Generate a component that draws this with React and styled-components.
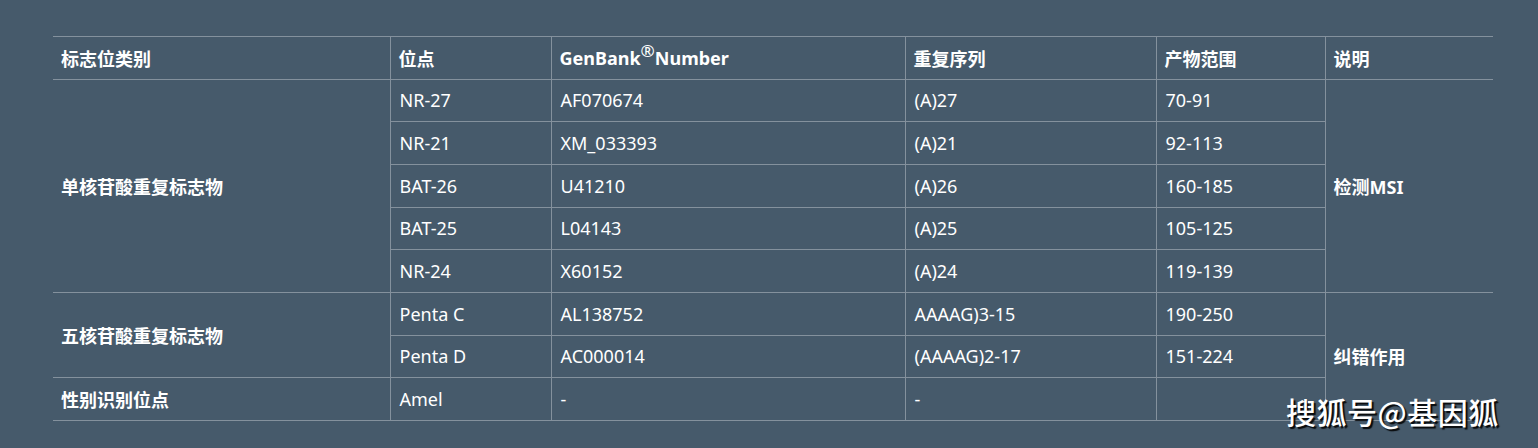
import React from 'react';
import styled, { createGlobalStyle } from 'styled-components';

const GlobalStyle = createGlobalStyle`
  html, body {
    margin: 0;
    padding: 0;
    background-color: #465a6b;
  }
`;

const Page = styled.div`
  position: relative;
  width: 1538px;
  height: 448px;
  box-sizing: border-box;
  padding: 36px 0 0 53px;
  background-color: #465a6b;
  font-family: "Noto Sans", "Noto Sans CJK SC", sans-serif;
  color: #ffffff;
`;

const Table = styled.table`
  width: 1440px;
  border-collapse: collapse;
  border-left: hidden;
  border-right: hidden;
  table-layout: fixed;
  font-size: 18px;
`;

const HeadCell = styled.th`
  height: 41.67px;
  padding: 0 8px;
  border: 1px solid #84919d;
  text-align: left;
  vertical-align: middle;
  font-weight: 700;
  white-space: nowrap;
`;

const Cell = styled.td`
  height: 41.67px;
  padding: 0 9px;
  padding-left: ${(p) => (p.$bold ? '8px' : '9px')};
  border: 1px solid #84919d;
  text-align: left;
  vertical-align: middle;
  font-weight: ${(p) => (p.$bold ? 700 : 400)};
  white-space: nowrap;
`;

const Sup = styled.sup`
  font-size: 0.95em;
  font-weight: 400;
  vertical-align: 0.45em;
  line-height: 0;
`;

const Watermark = styled.div`
  position: absolute;
  left: 1286px;
  top: 393px;
  font-family: "Noto Sans CJK SC", sans-serif;
  font-size: 30px;
  font-weight: 500;
  line-height: 1.2;
  letter-spacing: 0.5px;
  color: #ffffff;
  text-shadow: 2px 2px 1px rgba(0, 0, 0, 0.9);
  white-space: nowrap;
`;

// widths of the six columns, px
const colWidths = [337, 161, 354, 251, 169, 168];

const rows = [
  { group: '单核苷酸重复标志物', span: 5, note: '检测MSI', noteSpan: 5, site: 'NR-27', gb: 'AF070674', seq: '(A)27', range: '70-91' },
  { site: 'NR-21', gb: 'XM_033393', seq: '(A)21', range: '92-113' },
  { site: 'BAT-26', gb: 'U41210', seq: '(A)26', range: '160-185' },
  { site: 'BAT-25', gb: 'L04143', seq: '(A)25', range: '105-125' },
  { site: 'NR-24', gb: 'X60152', seq: '(A)24', range: '119-139' },
  { group: '五核苷酸重复标志物', span: 2, note: '纠错作用', noteSpan: 3, site: 'Penta C', gb: 'AL138752', seq: 'AAAAG)3-15', range: '190-250' },
  { site: 'Penta D', gb: 'AC000014', seq: '(AAAAG)2-17', range: '151-224' },
  { group: '性别识别位点', span: 1, site: 'Amel', gb: '-', seq: '-', range: '' },
];

const App = () => {
  return (
    <Page>
      <GlobalStyle />
      <Table>
        <colgroup>
          {colWidths.map((w, i) => (
            <col key={i} style={{ width: `${w}px` }} />
          ))}
        </colgroup>
        <thead>
          <tr>
            <HeadCell>标志位类别</HeadCell>
            <HeadCell>位点</HeadCell>
            <HeadCell>
              GenBank<Sup>®</Sup>Number
            </HeadCell>
            <HeadCell>重复序列</HeadCell>
            <HeadCell>产物范围</HeadCell>
            <HeadCell>说明</HeadCell>
          </tr>
        </thead>
        <tbody>
          {rows.map((row) => (
            <tr key={row.site}>
              {row.group && (
                <Cell $bold rowSpan={row.span}>
                  {row.group}
                </Cell>
              )}
              <Cell>{row.site}</Cell>
              <Cell>{row.gb}</Cell>
              <Cell>{row.seq}</Cell>
              <Cell>{row.range}</Cell>
              {row.note && (
                <Cell $bold rowSpan={row.noteSpan}>
                  {row.note}
                </Cell>
              )}
            </tr>
          ))}
        </tbody>
      </Table>
      <Watermark>搜狐号@基因狐</Watermark>
    </Page>
  );
};

export default App;
